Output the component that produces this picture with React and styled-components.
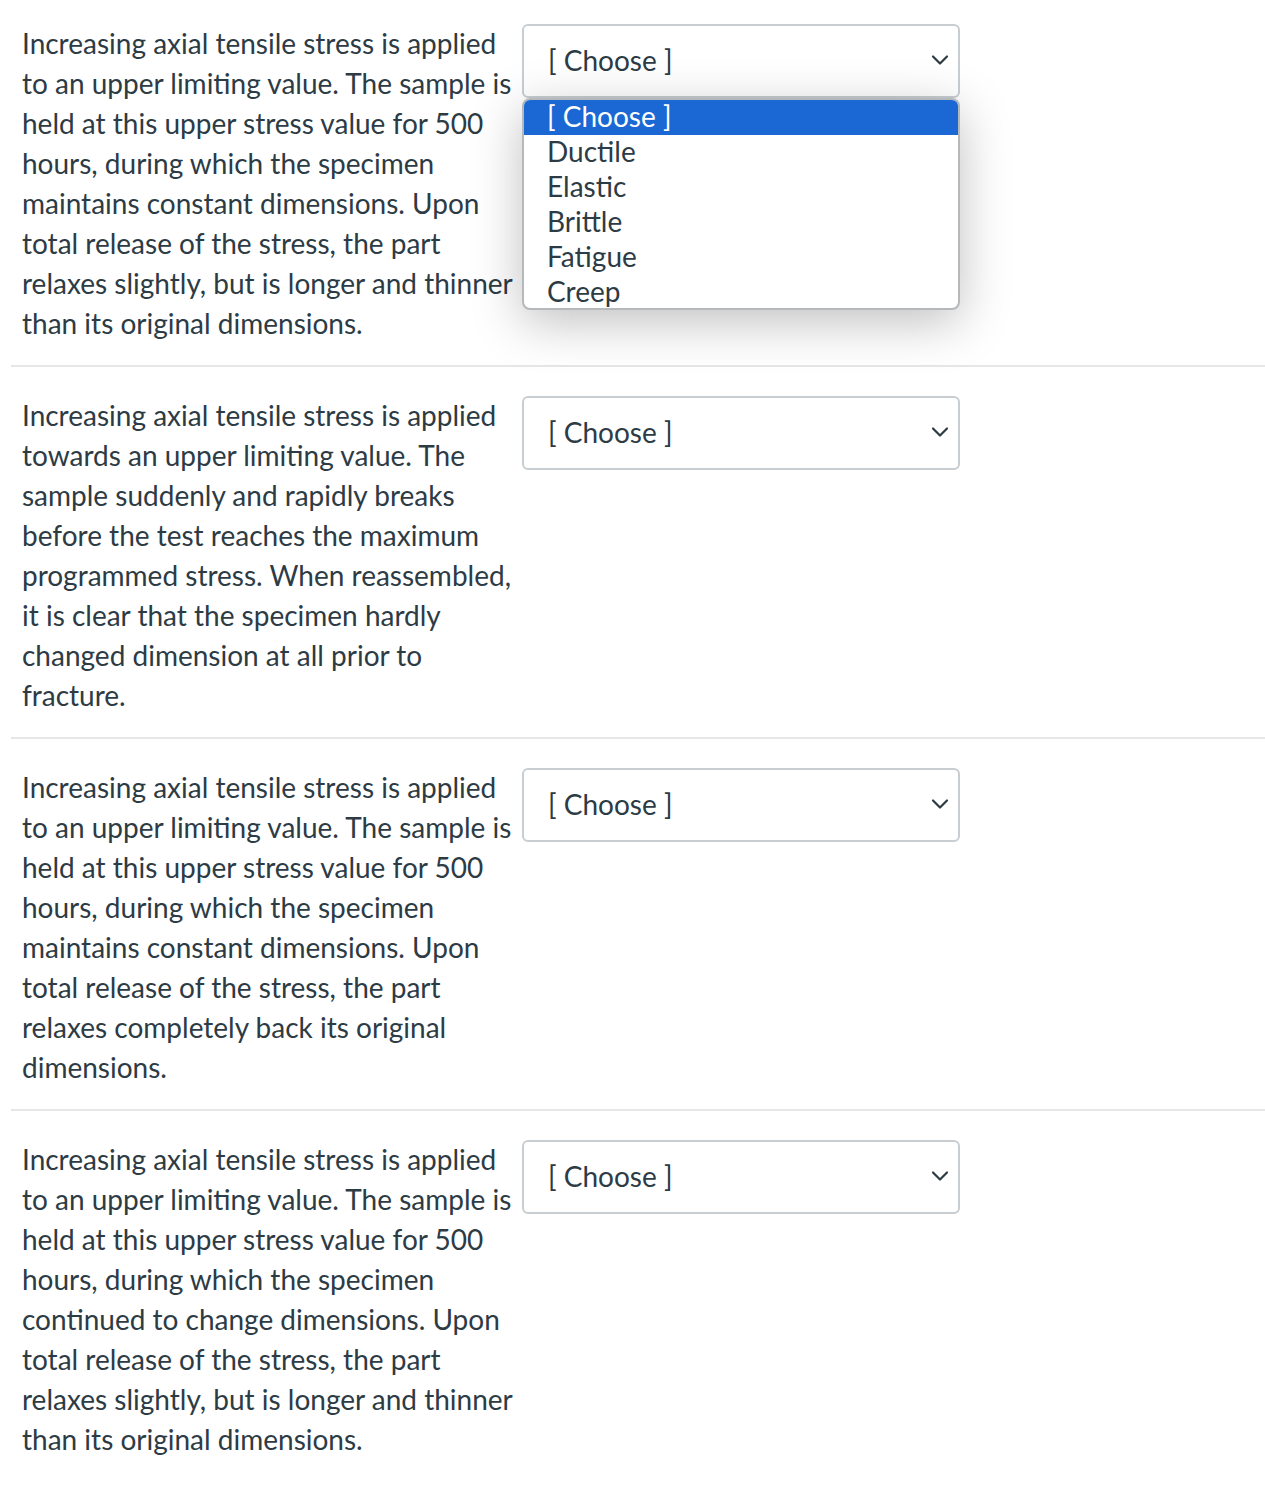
import styled, { createGlobalStyle } from "styled-components";

const GlobalStyle = createGlobalStyle`
  body {
    margin: 0;
    background: #ffffff;
    font-family: Lato, "Open Sans", sans-serif;
    color: #2d3b45;
  }
`;

// whole list of questions
const Page = styled.div`
  padding: 0 0 40px 11px;
`;

// one question row: prompt on the left, select on the right
const Row = styled.div`
  display: grid;
  grid-template-columns: 496px 438px;
  column-gap: 4px;
  align-items: start;
  padding: ${(p) => (p.$first ? "23px" : "28px")} 0 22px 11px;
  border-bottom: ${(p) => (p.$last ? "none" : "2px solid #e6e6e6")};
`;

const Prompt = styled.p`
  margin: 0;
  font-size: 28px;
  line-height: 40px;
  color: #2d3b45;
`;

const SelectWrap = styled.div`
  position: relative;
  margin-top: 1px;
`;

const SelectBox = styled.div`
  height: 74px;
  box-sizing: border-box;
  border: 2px solid #c7cdd1;
  border-radius: 6px;
  background: #fff;
  display: flex;
  align-items: center;
  justify-content: space-between;
  padding: 0 9px 2px 24px;
  font-size: 28px;
  color: #2d3b45;
`;

const Chevron = () => (
  <svg width="18" height="12" viewBox="0 0 18 12">
    <path d="M2 2.5 L9 9.5 L16 2.5" fill="none" stroke="#2d3b45" strokeWidth="2.2" strokeLinecap="round" strokeLinejoin="round" />
  </svg>
);

// the open option list over the first select
const OptionList = styled.ul`
  position: absolute;
  top: 74px;
  left: 0;
  right: 0;
  height: 212px;
  box-sizing: border-box;
  margin: 0;
  padding: 0;
  list-style: none;
  background: #fff;
  border: 2px solid #b5b9bc;
  border-radius: 8px;
  overflow: hidden;
  box-shadow: 0 12px 50px rgba(0, 0, 0, 0.25);
  z-index: 5;
`;

const Option = styled.li`
  height: 35px;
  line-height: 33px;
  padding-left: 23px;
  font-size: 28px;
  color: ${(p) => (p.$active ? "#ffffff" : "#2d3b45")};
  background: ${(p) => (p.$active ? "#1b67d4" : "transparent")};
`;

const questions = [
  "Increasing axial tensile stress is applied to an upper limiting value. The sample is held at this upper stress value for 500 hours, during which the specimen maintains constant dimensions. Upon total release of the stress, the part relaxes slightly, but is longer and thinner than its original dimensions.",
  "Increasing axial tensile stress is applied towards an upper limiting value. The sample suddenly and rapidly breaks before the test reaches the maximum programmed stress. When reassembled, it is clear that the specimen hardly changed dimension at all prior to fracture.",
  "Increasing axial tensile stress is applied to an upper limiting value. The sample is held at this upper stress value for 500 hours, during which the specimen maintains constant dimensions. Upon total release of the stress, the part relaxes completely back its original dimensions.",
  "Increasing axial tensile stress is applied to an upper limiting value. The sample is held at this upper stress value for 500 hours, during which the specimen continued to change dimensions. Upon total release of the stress, the part relaxes slightly, but is longer and thinner than its original dimensions.",
];

const options = ["[ Choose ]", "Ductile", "Elastic", "Brittle", "Fatigue", "Creep"];

export default function App() {
  return (
    <Page>
      <GlobalStyle />
      {questions.map((q, i) => (
        <Row key={i} $first={i === 0} $last={i === questions.length - 1}>
          <Prompt>{q}</Prompt>
          <SelectWrap>
            <SelectBox>
              <span>[ Choose ]</span>
              <Chevron />
            </SelectBox>
            {i === 0 && (
              <OptionList>
                {options.map((o, j) => (
                  <Option key={o} $active={j === 0}>
                    {o}
                  </Option>
                ))}
              </OptionList>
            )}
          </SelectWrap>
        </Row>
      ))}
    </Page>
  );
}
